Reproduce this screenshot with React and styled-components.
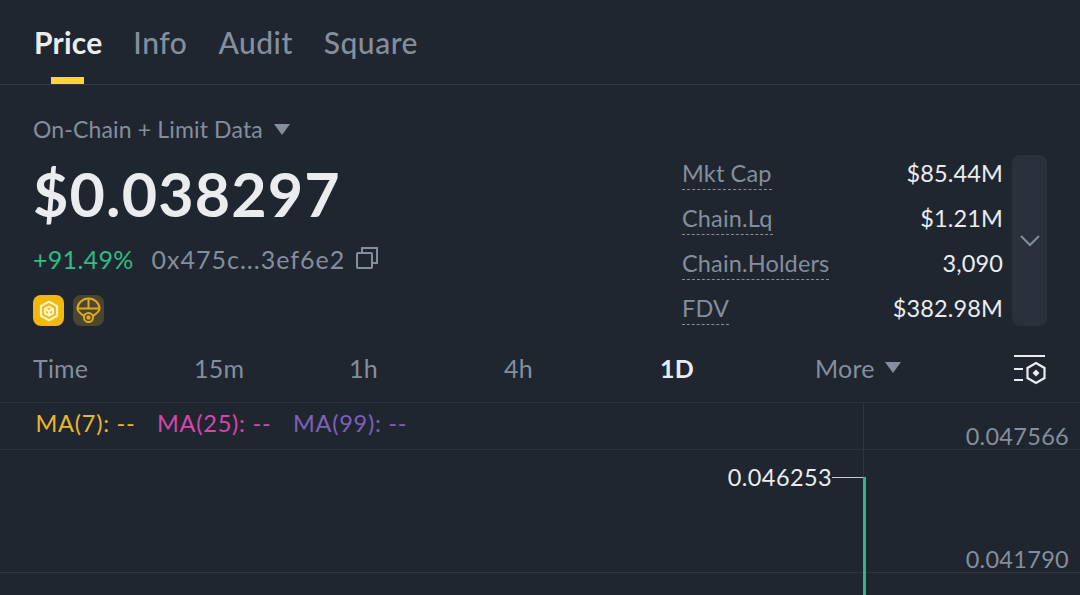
import React from 'react';
import styled, { createGlobalStyle } from 'styled-components';

const GlobalStyle = createGlobalStyle`
  html, body {
    margin: 0;
    padding: 0;
    background: #1f2630;
    overflow: hidden;
  }
  * { box-sizing: border-box; }
`;

const Page = styled.div`
  width: 1080px;
  height: 595px;
  overflow: hidden;
  background: #1f2630;
  font-family: "Lato", "Open Sans", sans-serif;
  color: #848e9c;
`;

const Tabs = styled.div`
  height: 85px;
  display: flex;
  gap: 31px;
  padding-left: 34px;
  border-bottom: 1px solid #333b46;
`;

const Tab = styled.div`
  position: relative;
  font-size: 30px;
  line-height: 84px;
  font-weight: ${p => (p.$active ? 700 : 500)};
  letter-spacing: ${p => (p.$active ? '0.2px' : '0.5px')};
  color: ${p => (p.$active ? '#eaecef' : '#848e9c')};
  ${p => p.$active && `
    &::after {
      content: '';
      position: absolute;
      left: 17px;
      right: 18px;
      bottom: 0;
      height: 7px;
      background: #fcd535;
    }
  `}
`;

const Summary = styled.div`
  height: 255px;
  padding: 0 33px;
  display: flex;
  justify-content: space-between;
`;

const Left = styled.div`
  display: flex;
  flex-direction: column;
`;

const Source = styled.div`
  margin-top: 29px;
  display: flex;
  align-items: center;
  gap: 11px;
  font-size: 23px;
  line-height: 30px;
  letter-spacing: 0.15px;
`;

const Caret = styled.svg`
  width: 16px;
  height: 11px;
  fill: #848e9c;
`;

const Price = styled.div`
  margin-top: 14px;
  font-size: 61px;
  line-height: 72px;
  font-weight: 700;
  letter-spacing: 1.15px;
  color: #eaecef;
`;

const Meta = styled.div`
  margin-top: 13px;
  display: flex;
  align-items: center;
  font-size: 25px;
  line-height: 32px;
`;

const Change = styled.span`
  color: #2ebd85;
  letter-spacing: 0.3px;
  margin-right: 18px;
`;

const Address = styled.span`
  letter-spacing: 1px;
`;

const Copy = styled.svg`
  width: 22px;
  height: 22px;
  margin: 0 0 2px 11px;
  fill: none;
  stroke: #848e9c;
  stroke-width: 2;
`;

const Badges = styled.div`
  margin-top: 20px;
  display: flex;
  gap: 9px;
`;

const Badge = styled.div`
  width: 31px;
  height: 31px;
  border-radius: 8px;
  display: flex;
  align-items: center;
  justify-content: center;
  background: ${p => p.$bg};
`;

const Right = styled.div`
  margin-top: 70px;
  height: 171px;
  display: flex;
  gap: 9px;
`;

const Stats = styled.div`
  width: 321px;
  display: flex;
  flex-direction: column;
  gap: 15px;
  margin-top: 3px;
`;

const StatRow = styled.div`
  height: 30px;
  display: flex;
  justify-content: space-between;
  align-items: flex-start;
  font-size: 23.5px;
  line-height: 30px;
`;

const StatLabel = styled.span`
  height: 32px;
  letter-spacing: 0.15px;
  border-bottom: 1px dashed #848e9c;
`;

const StatValue = styled.span`
  letter-spacing: 0.15px;
  color: #eaecef;
`;

const Expand = styled.div`
  width: 35px;
  border-radius: 8px;
  background: #2b313c;
  display: flex;
  align-items: center;
  justify-content: center;
`;

const Intervals = styled.div`
  height: 63px;
  padding: 0 0 7px 33px;
  display: grid;
  grid-template-columns: 161px 155px 155px 156px 155px 199px 1fr;
  align-items: center;
  border-bottom: 1px solid #2b323d;
  font-size: 25px;
  letter-spacing: 0.2px;
`;

const Interval = styled.div`
  display: flex;
  align-items: center;
  gap: 10px;
  font-weight: ${p => (p.$active ? 700 : 400)};
  color: ${p => (p.$active ? '#eaecef' : '#848e9c')};
`;

const IndicatorSvg = styled.svg`
  width: 32px;
  height: 30px;
  margin-top: 5px;
  fill: none;
  stroke: #eaecef;
  stroke-width: 2.2;
`;

const Chart = styled.div`
  position: relative;
  height: 193px;
`;

const MaRow = styled.div`
  height: 47px;
  padding: 5px 0 0 35.5px;
  display: flex;
  gap: 21.5px;
  font-size: 23.5px;
  line-height: 30px;
  letter-spacing: 0.75px;
  border-bottom: 1px solid #2b323d;
`;

const Ma = styled.span`
  color: ${p => p.$color};
`;

const GridLine = styled.div`
  position: absolute;
  left: 0;
  right: 0;
  top: ${p => p.$top}px;
  height: 1px;
  background: #2f3641;
`;

const CrossLine = styled.div`
  position: absolute;
  left: 863px;
  top: 0;
  bottom: 0;
  width: 1px;
  background: #2f3641;
`;

const AxisLabel = styled.div`
  position: absolute;
  right: 11px;
  top: ${p => p.$top}px;
  font-size: 23.5px;
  line-height: 28px;
  letter-spacing: 0.3px;
  color: #848e9c;
`;

const Candle = styled.div`
  position: absolute;
  left: 863px;
  top: 74px;
  bottom: 0;
  width: 3px;
  background: #38b08c;
`;

const HighTick = styled.div`
  position: absolute;
  left: 832px;
  top: 74px;
  width: 33px;
  height: 1px;
  background: #c9ced4;
`;

const HighLabel = styled.div`
  position: absolute;
  right: 248px;
  top: 60px;
  font-size: 23.5px;
  line-height: 28px;
  letter-spacing: 0.4px;
  color: #eaecef;
`;

const BnbIcon = () => (
  <svg width="22" height="22" viewBox="0 0 24 24" fill="none" stroke="#fff3cf" strokeWidth="2.4" strokeLinejoin="round">
    <path d="M12 1.8l8.8 5v10.4L12 22.2l-8.8-5V6.8z" />
    <path d="M12 7.2l4.4 2.5v4.9L12 17l-4.4-2.4V9.7z" />
    <path d="M7.6 9.7l4.4 2.5 4.4-2.5M12 12.2V17" />
  </svg>
);

const ParachuteIcon = () => (
  <svg width="31" height="31" viewBox="0 0 31 31" fill="none" stroke="#dcaa1e" strokeWidth="2">
    <path d="M4.5 14a11 10.5 0 0 1 22 0c0 2.5-3 4.5-6.5 7M4.5 14c0 2.5 3 4.5 6.5 7" />
    <path d="M4.5 13.5h22M15.5 4v9.5" />
    <circle cx="15.5" cy="22.5" r="4.5" />
    <circle cx="15.5" cy="22.5" r="1.2" fill="#dcaa1e" />
  </svg>
);

const IndicatorIcon = () => (
  <IndicatorSvg viewBox="0 0 32 30">
    <path d="M0 1h31M0 14h9M0 25h9" />
    <path d="M22 8l8.5 5v10L22 28l-8.5-5V13z" />
    <path d="M22 14.5l3.5 3.5-3.5 3.5-3.5-3.5z" fill="#eaecef" stroke="none" />
  </IndicatorSvg>
);

const stats = [
  ['Mkt Cap', '$85.44M'],
  ['Chain.Lq', '$1.21M'],
  ['Chain.Holders', '3,090'],
  ['FDV', '$382.98M'],
];

const intervals = ['Time', '15m', '1h', '4h', '1D'];

const App = () => (
  <Page>
    <GlobalStyle />
    <Tabs>
      <Tab $active>Price</Tab>
      <Tab>Info</Tab>
      <Tab>Audit</Tab>
      <Tab>Square</Tab>
    </Tabs>
    <Summary>
      <Left>
        <Source>
          On-Chain + Limit Data
          <Caret viewBox="0 0 16 11"><path d="M0 0h16L8 11z" /></Caret>
        </Source>
        <Price>$0.038297</Price>
        <Meta>
          <Change>+91.49%</Change>
          <Address>0x475c...3ef6e2</Address>
          <Copy viewBox="0 0 22 22">
            <path d="M6 5V1h15v15h-4" />
            <rect x="1" y="6" width="15" height="15" rx="1" />
          </Copy>
        </Meta>
        <Badges>
          <Badge $bg="#f0b90b"><BnbIcon /></Badge>
          <Badge $bg="#4b4630"><ParachuteIcon /></Badge>
        </Badges>
      </Left>
      <Right>
        <Stats>
          {stats.map(([label, value]) => (
            <StatRow key={label}>
              <StatLabel>{label}</StatLabel>
              <StatValue>{value}</StatValue>
            </StatRow>
          ))}
        </Stats>
        <Expand>
          <svg width="20" height="12" viewBox="0 0 20 12" fill="none" stroke="#848e9c" strokeWidth="2">
            <path d="M1 1l9 9 9-9" />
          </svg>
        </Expand>
      </Right>
    </Summary>
    <Intervals>
      {intervals.map(name => (
        <Interval key={name} $active={name === '1D'}>{name}</Interval>
      ))}
      <Interval>
        More
        <Caret viewBox="0 0 16 11"><path d="M0 0h16L8 11z" /></Caret>
      </Interval>
      <IndicatorIcon />
    </Intervals>
    <Chart>
      <MaRow>
        <Ma $color="#e8b62f">MA(7): --</Ma>
        <Ma $color="#d548a8">MA(25): --</Ma>
        <Ma $color="#7e60b8">MA(99): --</Ma>
      </MaRow>
      <GridLine $top={169} />
      <CrossLine />
      <AxisLabel $top={19}>0.047566</AxisLabel>
      <AxisLabel $top={142}>0.041790</AxisLabel>
      <HighLabel>0.046253</HighLabel>
      <HighTick />
      <Candle />
    </Chart>
  </Page>
);

export default App;
